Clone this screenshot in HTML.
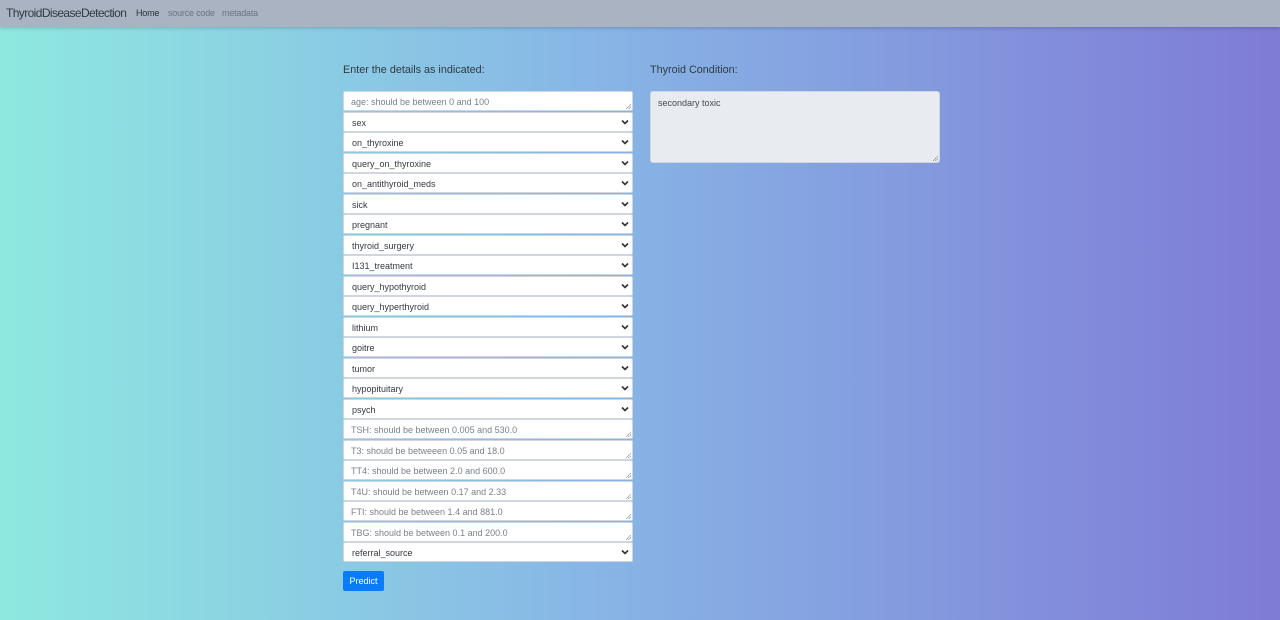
<!DOCTYPE html>
<html><head><meta charset="utf-8"><style>
*{box-sizing:border-box;margin:0;padding:0}
body{width:1280px;height:620px;overflow:hidden;font-family:"Liberation Sans",sans-serif;background:linear-gradient(90deg,#8ee8e0 0%,#88b7e6 45%,#7f7bd6 100%);position:relative}
.nav{position:absolute;left:0;top:0;width:1280px;height:27px;background:#a9b3c1;box-shadow:0 1px 4px rgba(0,0,0,.2)}
.brand{position:absolute;left:6px;top:6px;font-size:12px;color:#333a44;letter-spacing:-0.6px}
.nl{position:absolute;top:8px;font-size:9px;color:#6c7480;white-space:nowrap;letter-spacing:-0.2px}
.h{position:absolute;top:64px;font-size:10.8px;color:#2f3a44}
.f{position:absolute;left:343px;width:290px;height:20px;background:#fff;border:1px solid #cfd6e0;border-radius:2px;font-size:9px;padding:5px 8px;color:#343a40}
.f.t{color:#7a8088;padding-left:7px}
.f svg{position:absolute;right:3px;top:6px}
.g{position:absolute;right:1px;bottom:1px;width:5px;height:5px;background:linear-gradient(135deg,transparent 45%,#999 45%,#999 55%,transparent 55%,transparent 70%,#999 70%,#999 80%,transparent 80%)}
</style></head><body>
<div class="nav"><span class="brand">ThyroidDiseaseDetection</span>
<span class="nl" style="left:136px;color:#2a3038">Home</span>
<span class="nl" style="left:168px">source code</span>
<span class="nl" style="left:222px">metadata</span></div>
<div class="h" style="left:343px">Enter the details as indicated:</div>
<div class="h" style="left:650px">Thyroid Condition:</div>
<div style="position:absolute;left:650px;top:91px;width:290px;height:72px;background:#e8ebef;border:1px solid #cfd6e0;border-radius:3px;font-size:9px;color:#454b52;padding:6px 7px">secondary toxic<div class="g"></div></div>
<div class="f t" style="top:91px">age: should be between 0 and 100<div class="g"></div></div>
<div class="f" style="top:111.5px">sex<svg width="8" height="6" viewBox="0 0 8 6"><path d="M1 1.5L4 4.5L7 1.5" stroke="#333" stroke-width="1.6" fill="none"/></svg></div>
<div class="f" style="top:132px">on_thyroxine<svg width="8" height="6" viewBox="0 0 8 6"><path d="M1 1.5L4 4.5L7 1.5" stroke="#333" stroke-width="1.6" fill="none"/></svg></div>
<div class="f" style="top:152.5px">query_on_thyroxine<svg width="8" height="6" viewBox="0 0 8 6"><path d="M1 1.5L4 4.5L7 1.5" stroke="#333" stroke-width="1.6" fill="none"/></svg></div>
<div class="f" style="top:173px">on_antithyroid_meds<svg width="8" height="6" viewBox="0 0 8 6"><path d="M1 1.5L4 4.5L7 1.5" stroke="#333" stroke-width="1.6" fill="none"/></svg></div>
<div class="f" style="top:193.5px">sick<svg width="8" height="6" viewBox="0 0 8 6"><path d="M1 1.5L4 4.5L7 1.5" stroke="#333" stroke-width="1.6" fill="none"/></svg></div>
<div class="f" style="top:214px">pregnant<svg width="8" height="6" viewBox="0 0 8 6"><path d="M1 1.5L4 4.5L7 1.5" stroke="#333" stroke-width="1.6" fill="none"/></svg></div>
<div class="f" style="top:234.5px">thyroid_surgery<svg width="8" height="6" viewBox="0 0 8 6"><path d="M1 1.5L4 4.5L7 1.5" stroke="#333" stroke-width="1.6" fill="none"/></svg></div>
<div class="f" style="top:255px">I131_treatment<svg width="8" height="6" viewBox="0 0 8 6"><path d="M1 1.5L4 4.5L7 1.5" stroke="#333" stroke-width="1.6" fill="none"/></svg></div>
<div class="f" style="top:275.5px">query_hypothyroid<svg width="8" height="6" viewBox="0 0 8 6"><path d="M1 1.5L4 4.5L7 1.5" stroke="#333" stroke-width="1.6" fill="none"/></svg></div>
<div class="f" style="top:296px">query_hyperthyroid<svg width="8" height="6" viewBox="0 0 8 6"><path d="M1 1.5L4 4.5L7 1.5" stroke="#333" stroke-width="1.6" fill="none"/></svg></div>
<div class="f" style="top:316.5px">lithium<svg width="8" height="6" viewBox="0 0 8 6"><path d="M1 1.5L4 4.5L7 1.5" stroke="#333" stroke-width="1.6" fill="none"/></svg></div>
<div class="f" style="top:337px">goitre<svg width="8" height="6" viewBox="0 0 8 6"><path d="M1 1.5L4 4.5L7 1.5" stroke="#333" stroke-width="1.6" fill="none"/></svg></div>
<div class="f" style="top:357.5px">tumor<svg width="8" height="6" viewBox="0 0 8 6"><path d="M1 1.5L4 4.5L7 1.5" stroke="#333" stroke-width="1.6" fill="none"/></svg></div>
<div class="f" style="top:378px">hypopituitary<svg width="8" height="6" viewBox="0 0 8 6"><path d="M1 1.5L4 4.5L7 1.5" stroke="#333" stroke-width="1.6" fill="none"/></svg></div>
<div class="f" style="top:398.5px">psych<svg width="8" height="6" viewBox="0 0 8 6"><path d="M1 1.5L4 4.5L7 1.5" stroke="#333" stroke-width="1.6" fill="none"/></svg></div>
<div class="f t" style="top:419px">TSH: should be between 0.005 and 530.0<div class="g"></div></div>
<div class="f t" style="top:439.5px">T3: should be betweeen 0.05 and 18.0<div class="g"></div></div>
<div class="f t" style="top:460px">TT4: should be between 2.0 and 600.0<div class="g"></div></div>
<div class="f t" style="top:480.5px">T4U: should be between 0.17 and 2.33<div class="g"></div></div>
<div class="f t" style="top:501px">FTI: should be between 1.4 and 881.0<div class="g"></div></div>
<div class="f t" style="top:521.5px">TBG: should be between 0.1 and 200.0<div class="g"></div></div>
<div class="f" style="top:542px">referral_source<svg width="8" height="6" viewBox="0 0 8 6"><path d="M1 1.5L4 4.5L7 1.5" stroke="#333" stroke-width="1.6" fill="none"/></svg></div>
<div style="position:absolute;left:343px;top:571px;width:41px;height:20px;background:#0a7bff;border-radius:2px;color:#fff;font-size:9px;text-align:center;line-height:20px">Predict</div>
</body></html>
